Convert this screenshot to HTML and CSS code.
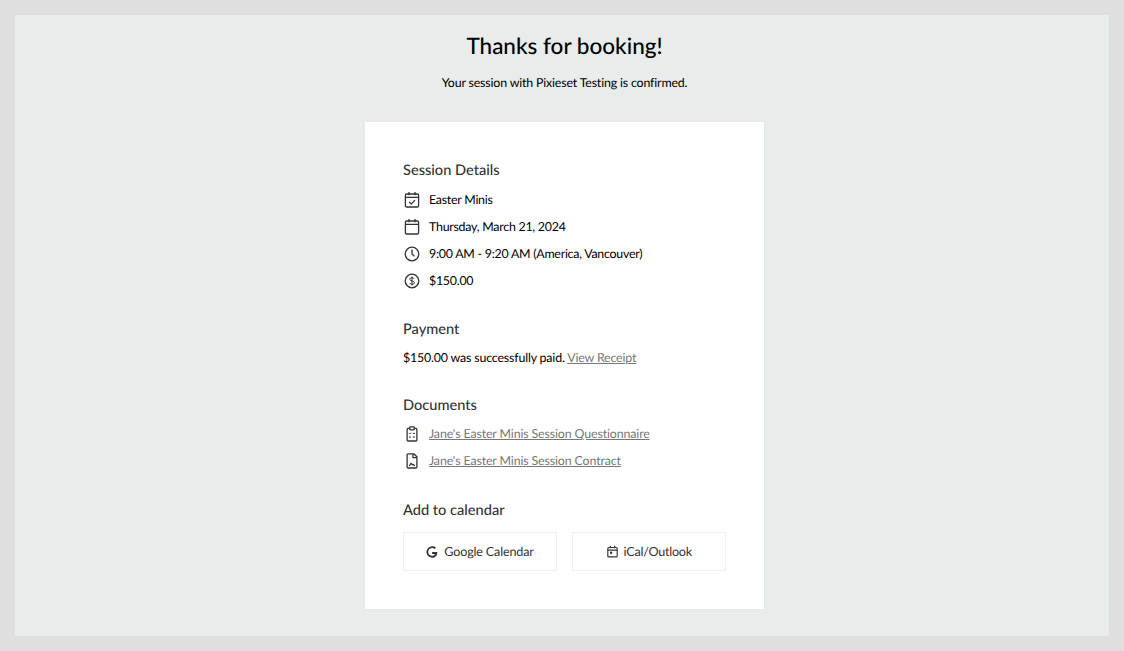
FILE: index.html
```html
<!DOCTYPE html>
<html lang="en">
<head>
<meta charset="utf-8">
<title>Thanks for booking!</title>
<link rel="stylesheet" href="styles.css">
</head>
<body>
<main class="panel">
  <h1 class="title">Thanks for booking!</h1>
  <p class="subtitle">Your session with Pixieset Testing is confirmed.</p>
  <div class="card">
    <section class="details">
      <h2 class="heading">Session Details</h2>
      <ul class="rows">
        <li class="row">
          <svg class="icon" viewBox="0 0 18 18"><rect x="2.400" y="3" width="13.200" height="13" rx="1.200"/><path d="M2.400 6.400h13.200M6 1v3.200M12 1v3.200M6.200 11l2.100 2.100 3.600-4"/></svg>
          <span>Easter Minis</span>
        </li>
        <li class="row">
          <svg class="icon" viewBox="0 0 18 18"><rect x="2.400" y="3" width="13.200" height="13" rx="1.200"/><path d="M2.400 6.400h13.200M6 1v3.200M12 1v3.200"/></svg>
          <span>Thursday, March 21, 2024</span>
        </li>
        <li class="row">
          <svg class="icon" viewBox="0 0 18 18"><circle cx="9" cy="9" r="6.800"/><path d="M9 4.600V9l2.500 2.400"/></svg>
          <span>9:00 AM - 9:20 AM (America, Vancouver)</span>
        </li>
        <li class="row">
          <svg class="icon" viewBox="0 0 18 18"><circle cx="9" cy="9" r="6.800"/><path class="thin" d="M11.200 6.900C10.900 6.100 10.100 5.700 9 5.700c-1.300 0-2.200.6-2.200 1.600 0 2.300 4.500 1.100 4.500 3.400 0 1.100-1 1.600-2.300 1.600-1.100 0-2-.4-2.300-1.300M9 4.500v9"/></svg>
          <span>$150.00</span>
        </li>
      </ul>
    </section>
    <section class="payment">
      <h2 class="heading">Payment</h2>
      <p class="paid">$150.00 was successfully paid. <a class="link" href="#">View Receipt</a></p>
    </section>
    <section class="documents">
      <h2 class="heading">Documents</h2>
      <ul class="rows">
        <li class="row">
          <svg class="icon" viewBox="0 0 18 18"><path d="M6.800 3.400H5.200a1.100 1.100 0 0 0-1.100 1.100v10.400a1.100 1.100 0 0 0 1.100 1.100h7.600a1.100 1.100 0 0 0 1.100-1.100V4.500a1.100 1.100 0 0 0-1.100-1.100h-1.600"/><rect x="6.800" y="1.800" width="4.400" height="3" rx=".5"/><path class="thin" d="M6 8.200l.8.800 1.200-1.300M9.800 8.400H12M6 12h2M9.800 12H12"/></svg>
          <a class="link" href="#">Jane's Easter Minis Session Questionnaire</a>
        </li>
        <li class="row">
          <svg class="icon" viewBox="0 0 18 18"><path d="M10.800 1.800H5.200a1.100 1.100 0 0 0-1.100 1.100v12a1.100 1.100 0 0 0 1.100 1.100h7.600a1.100 1.100 0 0 0 1.100-1.100V4.800z"/><path d="M10 2v3.600h3.800M6.200 14l1.800-2.600 1.500 1.400.8-.5 1.400 1.700"/></svg>
          <a class="link" href="#">Jane's Easter Minis Session Contract</a>
        </li>
      </ul>
    </section>
    <section class="calendar">
      <h2 class="heading">Add to calendar</h2>
      <div class="buttons">
        <a class="button" href="#">
          <svg class="btn-icon google" viewBox="0 0 18 18"><path d="M16.800 9.100H9.200v2.900h4.200c-.6 1.800-2.100 2.800-4.300 2.800a5.800 5.800 0 1 1 3.700-10.300l2.100-2.100A8.600 8.600 0 1 0 9.100 17.600c5 0 8.200-3.400 7.700-8.500z"/></svg>
          <span>Google Calendar</span>
        </a>
        <a class="button ical-button" href="#">
          <svg class="btn-icon ical" viewBox="0 0 18 18"><rect x="2.500" y="3.500" width="13" height="13" rx="1.300"/><path d="M2.500 7h13M6 1v3.500M12 1v3.500"/><rect class="dot" x="5.600" y="9.200" width="3" height="3"/></svg>
          <span>iCal/Outlook</span>
        </a>
      </div>
    </section>
  </div>
</main>
</body>
</html>
```
FILE: styles.css
```css
* { box-sizing: border-box; }
html, body { height: 100%; }
body {
  margin: 0;
  padding: 15px;
  background: #dfdfdf;
  font-family: Lato, "Liberation Sans", sans-serif;
  color: #000;
  text-rendering: geometricPrecision;
}
.panel {
  height: 621px;
  background: #e8ecea;
  display: flex;
  flex-direction: column;
  align-items: center;
  padding: 16px 0 0 5px;
}
.title {
  margin: 0;
  font-size: 22.500px;
  line-height: 30px;
  font-weight: 500;
}
.subtitle {
  margin: 12px 0 0;
  font-size: 12.400px;
  line-height: 20px;
  letter-spacing: -.17px;
}
.card {
  width: 399px;
  height: 487px;
  margin-top: 29px;
  padding: 39px 38px 38px;
  background: #fff;
  box-shadow: 0 0 2px rgba(0,0,0,.05);
  font-size: 12.400px;
  letter-spacing: -.17px;
}
.heading {
  margin: 0;
  font-size: 14.600px;
  line-height: 20px;
  font-weight: 500;
  color: #333;
  letter-spacing: 0;
}
.rows { list-style: none; margin: 0; padding: 0; }
.details .rows { margin-top: 5px; letter-spacing: -.25px; }
.row {
  display: flex;
  align-items: center;
  gap: 8px;
  height: 27.200px;
  line-height: 20px;
}
.icon {
  width: 18px;
  height: 18px;
  flex: none;
  fill: none;
  stroke: #333;
  stroke-width: 1.300;
  stroke-linejoin: round;
}
.icon .thin { stroke-width: 1; }
.payment { margin-top: 25px; }
.paid { margin: 8px 0 0; line-height: 20px; }
.link { color: #777; text-decoration: underline; }
.documents { margin-top: 28px; }
.documents .rows { margin-top: 5px; letter-spacing: -.13px; }
.documents .row { height: 27px; }
.calendar { margin-top: 26.500px; }
.buttons {
  display: flex;
  gap: 15px;
  margin-top: 11px;
}
.button {
  flex: 1;
  height: 39px;
  display: flex;
  align-items: center;
  justify-content: center;
  gap: 6px;
  border: 1px solid #f0f0f0;
  color: #333;
  text-decoration: none;
  font-size: 12.600px;
}
.ical-button { letter-spacing: -.25px; }
.btn-icon { flex: none; }
.google { width: 12px; height: 12px; fill: #333; }
.ical { width: 13px; height: 13px; fill: none; stroke: #333; stroke-width: 1.600; margin-right: -1.500px; }
.ical .dot { fill: #333; stroke: none; }
```
